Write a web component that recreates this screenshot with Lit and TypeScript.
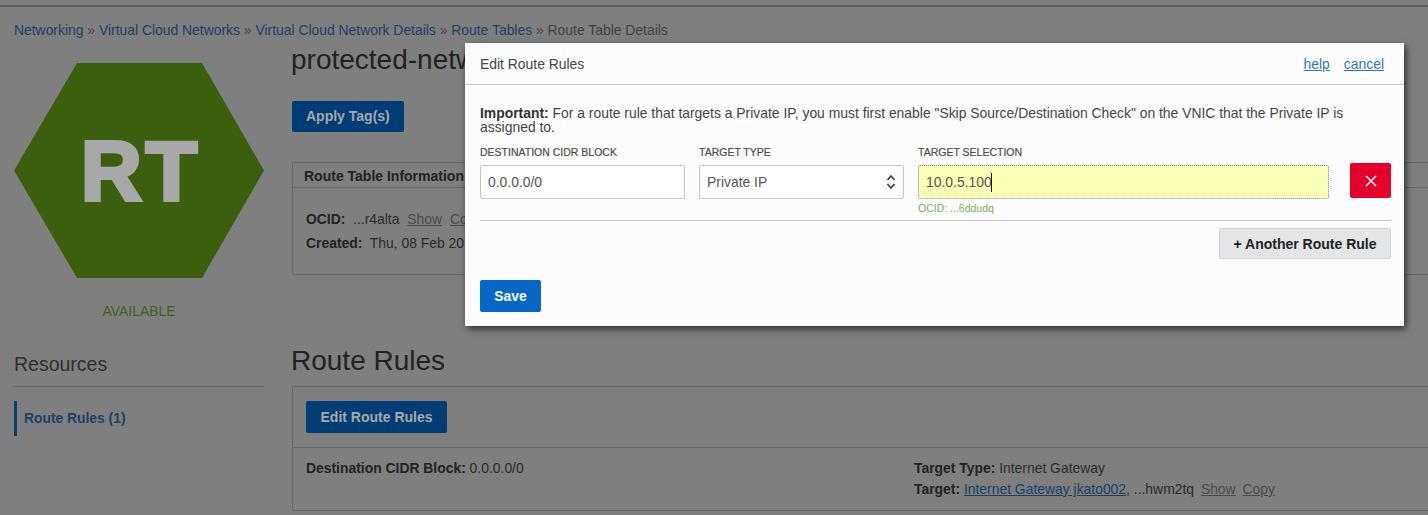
import { LitElement, html, css } from "lit";
import { customElement } from "lit/decorators.js";

@customElement("app-root")
export class AppRoot extends LitElement {
  static styles = css`
    :host { display: block; width: 1428px; height: 515px; overflow: hidden; position: relative; background: #7f7f7f; font-family: "Liberation Sans", Arial, sans-serif; font-size: 13.9px; color: #2a2a2a; }
    * { box-sizing: border-box; }
    .top { height: 7px; border-bottom: 2px solid #5f5f5f; }
    .crumbs { padding: 14px 14px 0; height: 35px; line-height: 18px; white-space: nowrap; }
    .crumbs a { color: #1a4068; text-decoration: none; }
    .crumbs span { color: #3f3f3f; }
    .crumbs i { font-style: normal; color: #444; }
    .main { display: grid; grid-template-columns: 250px 1fr; column-gap: 28px; padding-left: 14px; }
    .hex { display: block; margin-top: 21px; width: 250px; height: 216px; }
    .hex text { font-family: "Liberation Sans", Arial, sans-serif; font-weight: 700; font-size: 84px; letter-spacing: 4px; fill: #a8a8a8; stroke: #a8a8a8; stroke-width: 4px; }
    .avail { margin-top: 23px; height: 18px; line-height: 18px; text-align: center; color: #42601c; }
    .res { margin-top: 32px; height: 35px; border-bottom: 1px solid #666; font-size: 19.5px; line-height: 24px; color: #2e2e2e; }
    .nav { margin-top: 14px; height: 35px; border-left: 3px solid #0a3f6c; padding-left: 7px; line-height: 34px; font-weight: 700; font-size: 13.85px; color: #1a4068; }
    .title { margin: 0; margin-left: -1px; padding-top: 1px; height: 47px; font-size: 28px; line-height: 34px; font-weight: 400; color: #222; white-space: nowrap; }
    .btn { display: inline-block; height: 31px; line-height: 31px; padding: 0 14px; background: #003d74; border-radius: 2px; color: #a9a9a9; font-weight: 700; font-size: 14px; }
    .wide { padding: 0 14.5px; height: 32px; line-height: 32px; }
    .row1 { margin-top: 12px; height: 31px; }
    .box { width: 1200px; border: 1px solid #666; border-radius: 2px; }
    .info { margin-top: 30px; height: 113px; padding: 4px 11px; position: relative; }
    .info h4 { margin: 0; font-size: 14px; line-height: 18px; color: #222; }
    .info p { margin: 0; padding-left: 2px; line-height: 24px; white-space: nowrap; }
    .info .head { height: 40px; }
    .rule { position: absolute; left: 0; right: 0; top: 24px; border-top: 1px solid #666; }
    b { color: #222; }
    u { color: #4a4a4a; margin-left: 4px; }
    .h2 { margin: 0; margin-top: 69px; margin-left: -1px; height: 42px; font-size: 28px; font-weight: 400; line-height: 34px; color: #222; }
    .rr { height: 125px; }
    .rr .bar { height: 61px; border-bottom: 1px solid #6a6a6a; padding: 14px 13px; }
    .rr .cols { display: grid; grid-template-columns: 608px 1fr; padding: 10px 13px; line-height: 21px; }
    .rr .lnk { color: #1a4068; text-decoration: underline; }
    .rr .cols u { margin-left: 3px; }
    .modal { position: absolute; left: 465px; top: 43px; width: 939px; height: 283px; background: #fcfcfc; box-shadow: 2px 3px 7px rgba(0,0,0,.65); color: #444; }
    .mh { height: 42px; border-bottom: 1px solid #c8c8c8; display: flex; justify-content: space-between; align-items: center; padding: 1px 20px 0 15px; line-height: 18px; }
    .mh div { display: flex; gap: 14px; }
    .mh a { color: #2f78b8; text-decoration: underline; }
    .mb { padding: 21px 13px 0 15px; }
    .imp { margin: 0; line-height: 14px; height: 28px; color: #444; width: 880px; }
    .imp b { color: #333; }
    .fields { display: flex; margin-top: 11px; align-items: flex-start; }
    .f { margin-right: 14px; }
    label { display: block; height: 15px; line-height: 15px; font-size: 10.5px; color: #4c4c4c; white-space: nowrap; -webkit-text-stroke: 0.2px #4c4c4c; }
    .ctl { margin-top: 5px; height: 34px; background: #fff; border: 1px solid #c4c4c4; border-radius: 2px; padding: 0 7px; line-height: 33px; color: #555; display: flex; align-items: center; justify-content: space-between; }
    .w1 { width: 205px; }
    .w3 { width: 411px; margin-right: 21px; }
    .ctl.on { background: #fbffb6; border: 1px dotted #5b8aa8; justify-content: flex-start; }
    .caret { width: 1px; height: 19px; background: #111; margin-left: -1px; }
    .hint { margin-top: 3px; height: 13px; line-height: 13px; font-size: 10.5px; color: #7fae5a; }
    .del { width: 41px; height: 35px; margin-top: 18px; background: #e4002b; border-radius: 2px; display: flex; align-items: center; justify-content: center; }
    .hr { height: 1px; background: #c8c8c8; margin-top: 5px; }
    .another { display: flex; justify-content: flex-end; margin-top: 7px; }
    .another span { display: block; width: 172px; height: 31px; line-height: 30px; text-align: center; background: #e3e5e7; border: 1px solid #cfd1d3; border-radius: 2px; font-weight: 700; font-size: 14px; color: #222; }
    .save { display: inline-block; margin-top: 21px; width: 61px; height: 32px; line-height: 32px; text-align: center; background: #0668c6; border-radius: 2px; color: #fff; font-weight: 700; }
  `;

  render() {
    return html`
      <div class="top"></div>
      <div class="crumbs"><a>Networking</a> <i>»</i> <a>Virtual Cloud Networks</a> <i>»</i> <a>Virtual Cloud Network Details</a> <i>»</i> <a>Route Tables</a> <i>»</i> <span>Route Table Details</span></div>
      <div class="main">
        <div>
          <svg class="hex" viewBox="0 0 250 216">
            <polygon points="0,107.5 63,0 188,0 250,107.5 188,215 63,215" fill="#3c5f0d"></polygon>
            <text x="127" y="137" text-anchor="middle">RT</text>
          </svg>
          <div class="avail">AVAILABLE</div>
          <div class="res">Resources</div>
          <div class="nav">Route Rules (1)</div>
        </div>
        <div>
          <h1 class="title">protected-netw</h1>
          <div class="row1"><span class="btn">Apply Tag(s)</span></div>
          <div class="box info">
            <div class="head"><h4>Route Table Information</h4></div>
            <div class="rule"></div>
            <p><b>OCID:</b>&nbsp; ...r4alta <u>Show</u> <u>Co</u></p>
            <p><b>Created:</b>&nbsp; Thu, 08 Feb 20</p>
          </div>
          <h2 class="h2">Route Rules</h2>
          <div class="box rr">
            <div class="bar"><span class="btn wide">Edit Route Rules</span></div>
            <div class="cols">
              <div><b>Destination CIDR Block:</b> 0.0.0.0/0</div>
              <div>
                <div><b>Target Type:</b> Internet Gateway</div>
                <div><b>Target:</b> <span class="lnk">Internet Gateway jkato002</span>, ...hwm2tq <u>Show</u> <u>Copy</u></div>
              </div>
            </div>
          </div>
        </div>
      </div>
      <div class="modal">
        <div class="mh"><span>Edit Route Rules</span><div><a>help</a><a>cancel</a></div></div>
        <div class="mb">
          <p class="imp"><b>Important:</b> For a route rule that targets a Private IP, you must first enable "Skip Source/Destination Check" on the VNIC that the Private IP is assigned to.</p>
          <div class="fields">
            <div class="f w1"><label>DESTINATION CIDR BLOCK</label><div class="ctl">0.0.0.0/0</div></div>
            <div class="f w1"><label>TARGET TYPE</label><div class="ctl">Private IP
              <svg width="10" height="16" viewBox="0 0 10 16" fill="none" stroke="#333" stroke-width="1.5"><path d="M1.5 6 5 2l3.5 4M1.5 10 5 14l3.5-4"></path></svg></div></div>
            <div class="f w3"><label>TARGET SELECTION</label><div class="ctl on">10.0.5.100<span class="caret"></span></div><div class="hint">OCID: ...6ddudq</div></div>
            <div class="del"><svg width="12" height="12" viewBox="0 0 12 12" stroke="#f4f4f4" stroke-width="1.6"><path d="M1 1l10 10M11 1 1 11"></path></svg></div>
          </div>
          <div class="hr"></div>
          <div class="another"><span>+ Another Route Rule</span></div>
          <span class="save">Save</span>
        </div>
      </div>
    `;
  }
}
